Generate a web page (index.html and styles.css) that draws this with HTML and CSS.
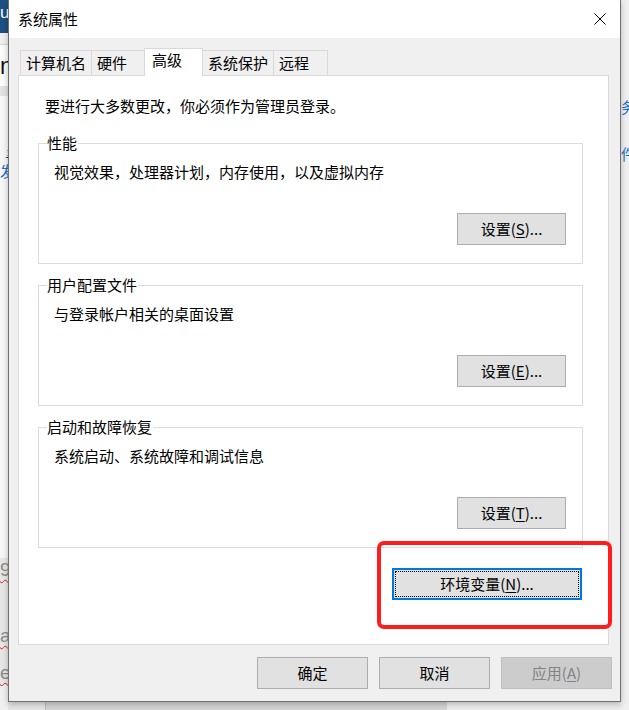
FILE: index.html
```html
<!DOCTYPE html>
<html lang="zh-CN">
<head>
<meta charset="UTF-8">
<meta name="viewport" content="width=device-width, initial-scale=1.0">
<title>系统属性</title>
<link rel="stylesheet" href="styles.css">
</head>
<body>

<div class="desktop">
  <!-- what is left of the windows behind the dialog -->
  <div class="side side-left">
    <div class="ls-title">u</div>
    <div class="ls-bar"></div>
    <div class="ls-head">n_</div>
    <div class="ls-band"></div>
    <div class="ls-page">
      <span class="ls-dark">寻</span>
      <span class="ls-link">发</span>
    </div>
    <div class="ls-code">
      <span class="typo">95</span>
      <span class="typo gap">aF</span>
      <span class="typo">e,</span>
    </div>
    <div class="ls-foot"></div>
  </div>

  <div class="window">
    <div class="titlebar">
      <span class="title">系统属性</span>
      <svg class="close" width="12" height="12" viewBox="0 0 12 12">
        <path d="M0.5 0.5 L11.5 11.5 M11.5 0.5 L0.5 11.5" stroke="#000" stroke-width="1" fill="none"/>
      </svg>
    </div>

    <div class="dlg-body">
      <div class="tabs">
        <div class="tab">计算机名</div>
        <div class="tab">硬件</div>
        <div class="tab active">高级</div>
        <div class="tab">系统保护</div>
        <div class="tab">远程</div>
      </div>

      <div class="panel">
        <p class="note">要进行大多数更改，你必须作为管理员登录。</p>

        <div class="group">
          <div class="group-title">性能</div>
          <p class="group-text">视觉效果，处理器计划，内存使用，以及虚拟内存</p>
          <div class="group-actions">
            <button class="btn">设置(<u>S</u>)...</button>
          </div>
        </div>

        <div class="group">
          <div class="group-title">用户配置文件</div>
          <p class="group-text">与登录帐户相关的桌面设置</p>
          <div class="group-actions">
            <button class="btn">设置(<u>E</u>)...</button>
          </div>
        </div>

        <div class="group">
          <div class="group-title">启动和故障恢复</div>
          <p class="group-text">系统启动、系统故障和调试信息</p>
          <div class="group-actions">
            <button class="btn">设置(<u>T</u>)...</button>
          </div>
        </div>

        <div class="env-row">
          <button class="btn btn-env">环境变量(<u>N</u>)...</button>
        </div>
      </div>

      <div class="footer">
        <button class="btn btn-wide">确定</button>
        <button class="btn btn-wide">取消</button>
        <button class="btn btn-wide" disabled>应用(<u>A</u>)</button>
      </div>
    </div>

    <!-- red annotation drawn over the dialog -->
    <div class="highlight"></div>
  </div>

  <div class="side side-right">
    <span class="rs-link first">务</span>
    <span class="rs-link">件</span>
  </div>

  <div class="under">
    <div class="under-a"></div>
    <div class="under-b"></div>
    <div class="under-c"></div>
  </div>
</div>

</body>
</html>
```

FILE: styles.css
```css
body {
  margin: 0;
  font-family: "Noto Sans CJK SC", sans-serif;
  font-size: 15px;
  color: #000;
  background: #f0f0f0;
  overflow: hidden;
}
.desktop {
  display: grid;
  grid-template-columns: 8px 613px 8px;
  grid-template-rows: 702px 8px;
  width: 629px;
  height: 710px;
}

/* background windows */
.side {
  overflow: hidden;
  white-space: nowrap;
}
.side-left {
  grid-column: 1;
  grid-row: 1 / 3;
  display: flex;
  flex-direction: column;
  background: #f7f7f7;
}
.ls-title {
  height: 33px;
  background: #1d4f80;
  color: #fff;
  font-family: "Liberation Sans", sans-serif;
  font-size: 17px;
  line-height: 26px;
}
.ls-bar {
  height: 11px;
  background: #f0f0f0;
  border-bottom: 1px solid #d6d6d6;
}
.ls-head {
  height: 41px;
  background: #fbfbfb;
  font-family: "Liberation Sans", sans-serif;
  font-size: 23px;
  line-height: 42px;
  color: #111;
}
.ls-band {
  height: 10px;
  background: #e2e2e2;
}
.ls-page {
  height: 462px;
  display: flex;
  flex-direction: column;
  padding-top: 52px;
  box-sizing: border-box;
  font-size: 15px;
  line-height: 15px;
}
.ls-dark {
  color: #333;
  padding-left: 5px;
}
.ls-link {
  color: #1a6fc4;
}
.ls-code {
  height: 128px;
  background: #e6e6e6;
  display: flex;
  flex-direction: column;
  padding-top: 2px;
  box-sizing: border-box;
  font-family: "Liberation Sans", sans-serif;
  font-size: 19px;
  line-height: 20px;
  color: #8c8c8c;
}
.typo {
  text-decoration: underline wavy #e02020;
  text-decoration-thickness: 1px;
  text-underline-offset: 3px;
}
.typo.gap {
  margin: 46px 0 17px;
}
.ls-foot {
  flex: 1;
  background: #f0f0f0;
}
.side-right {
  grid-column: 3;
  grid-row: 1 / 3;
  display: flex;
  flex-direction: column;
  background: #f0f0f0;
  font-size: 15px;
  line-height: 15px;
}
.rs-link {
  color: #1a6fc4;
  margin-top: 32px;
}
.rs-link.first {
  margin-top: 99px;
}
.under {
  grid-column: 2;
  grid-row: 2;
  display: flex;
}
.under-a {
  width: 37px;
  background: #e4e4e4;
  border-right: 1px solid #b8b8b8;
}
.under-b {
  width: 401px;
  background: #d4d4d4;
}
.under-c {
  flex: 1;
  background: #ececec;
}

/* dialog */
.window {
  grid-column: 2;
  grid-row: 1;
  position: relative;
  z-index: 1;
  display: flex;
  flex-direction: column;
  box-sizing: border-box;
  border: 1px solid #707070;
  border-top: none;
  background: #f0f0f0;
  box-shadow: 0 2px 6px rgba(0, 0, 0, 0.25);
}
.titlebar {
  height: 38px;
  flex-shrink: 0;
  display: flex;
  align-items: center;
  justify-content: space-between;
  padding: 0 14px 0 9px;
  background: #fff;
}
.title {
  line-height: 20px;
}
.dlg-body {
  flex: 1;
  padding: 10px 11px 0 9px;
}

.tabs {
  display: flex;
  align-items: flex-end;
  height: 28px;
  margin-bottom: -1px;
  padding-left: 2px;
}
.tab {
  box-sizing: border-box;
  height: 26px;
  min-width: 55px;
  padding: 0 5px;
  margin-right: -1px;
  border: 1px solid #d9d9d9;
  border-bottom: none;
  line-height: 24px;
  white-space: nowrap;
}
.tab.active {
  position: relative;
  z-index: 1;
  height: 28px;
  min-width: 59px;
  margin-left: -1px;
  padding: 0 5px 5px 7px;
  line-height: 22px;
  background: #fff;
}

.panel {
  box-sizing: border-box;
  height: 570px;
  padding: 0 25px 0 19px;
  border: 1px solid #d9d9d9;
  background: #fff;
  overflow: hidden;
}
.note {
  margin: 20px 0 0 7px;
  line-height: 20px;
}
.group {
  margin-top: 21px;
  padding: 0 16px 18px 15px;
  border: 1px solid #dcdcdc;
}
.note + .group {
  margin-top: 27px;
}
.group-title {
  width: fit-content;
  margin: -11px 0 0 -7px;
  padding: 0 1px 0 0;
  line-height: 20px;
  background: #fff;
}
.group-text {
  margin: 9px 0 0;
  line-height: 20px;
}
.group-actions {
  display: flex;
  justify-content: flex-end;
  margin-top: 31px;
}

.btn {
  box-sizing: border-box;
  width: 109px;
  height: 32px;
  padding: 0;
  border: 1px solid #adadad;
  background: #e1e1e1;
  color: #000;
  font: inherit;
  line-height: 20px;
}
.btn u {
  text-underline-offset: 2px;
}
.btn:disabled {
  background: #cccccc;
  border-color: #bfbfbf;
  color: #838383;
}
.env-row {
  display: flex;
  justify-content: flex-end;
  margin-top: 20px;
  padding-right: 1px;
}
.btn-env {
  width: 190px;
  border: 2px solid #0078d7;
  outline: 1px dotted #000;
  outline-offset: -4px;
}
.footer {
  display: flex;
  justify-content: flex-end;
  gap: 11px;
  margin: 12px -3px 0 0;
}
.btn-wide {
  width: 111px;
}

.highlight {
  position: absolute;
  left: 368px;
  top: 541px;
  width: 235px;
  height: 88px;
  box-sizing: border-box;
  border: 4px solid #ff1c1c;
  border-radius: 7px;
  pointer-events: none;
}
```
